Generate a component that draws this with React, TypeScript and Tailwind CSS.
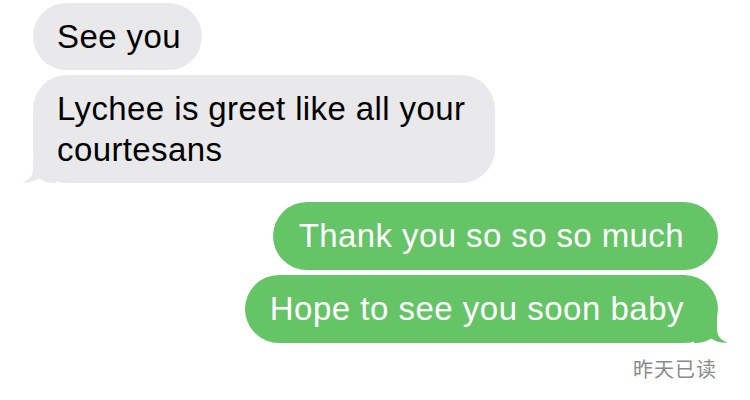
import React from "react";

const font = { fontFamily: '"Liberation Sans", Arial, sans-serif' };

function LeftTail() {
  return (
    <svg className="absolute left-[-11px] bottom-0" width="34" height="26" viewBox="0 0 34 26">
      <path d="M11 0 L11 12 C11 19 7 23.5 0 25.6 C6 26.2 12 24.8 17 21.5 C21 24.5 27 26 34 26 L34 0 Z" fill="#e9e9eb" />
    </svg>
  );
}

function RightTail() {
  return (
    <svg className="absolute right-[-10px] bottom-0" width="34" height="26" viewBox="0 0 34 26">
      <path d="M23 0 L23 12 C23 19 27 23.5 34 25.6 C28 26.2 22 24.8 17 21.5 C13 24.5 7 26 0 26 L0 0 Z" fill="#65c466" />
    </svg>
  );
}

export default function App() {
  return (
    <div className="w-[750px] h-[400px] bg-white flex flex-col overflow-hidden" style={font}>
      <div className="flex flex-col items-start pl-[33px] pt-[3px] gap-[5px]">
        <div className="bg-[#e9e9eb] rounded-[34px] pl-[24px] pr-[21px] py-[13px] text-[33px] leading-[41px] tracking-[0.4px] text-black">
          See you
        </div>
        <div className="relative bg-[#e9e9eb] rounded-[34px] w-[462px] pl-[24px] pr-[20px] py-[13px] text-[33px] leading-[41px] tracking-[0.4px] text-black">
          <span className="relative z-10">Lychee is greet like all your courtesans</span>
          <LeftTail />
        </div>
      </div>
      <div className="flex flex-col items-end pr-[32px] mt-[19px] gap-[5px]">
        <div className="bg-[#65c466] rounded-[34px] pl-[26px] pr-[34px] py-[13px] h-[68px] text-[33px] leading-[41px] tracking-[0.4px] text-white">
          Thank you so so so much
        </div>
        <div className="relative bg-[#65c466] rounded-[34px] pl-[25px] pr-[34px] py-[13px] h-[68px] text-[33px] leading-[41px] tracking-[0.5px] text-white">
          <span className="relative z-10">Hope to see you soon baby</span>
          <RightTail />
        </div>
        <div
          className="mt-[9px] mr-[1px] text-[20px] leading-[24px] tracking-[1px] text-[#8a8a8a]"
          style={{ fontFamily: '"Noto Sans CJK SC", sans-serif' }}
        >
          昨天已读
        </div>
      </div>
    </div>
  );
}
